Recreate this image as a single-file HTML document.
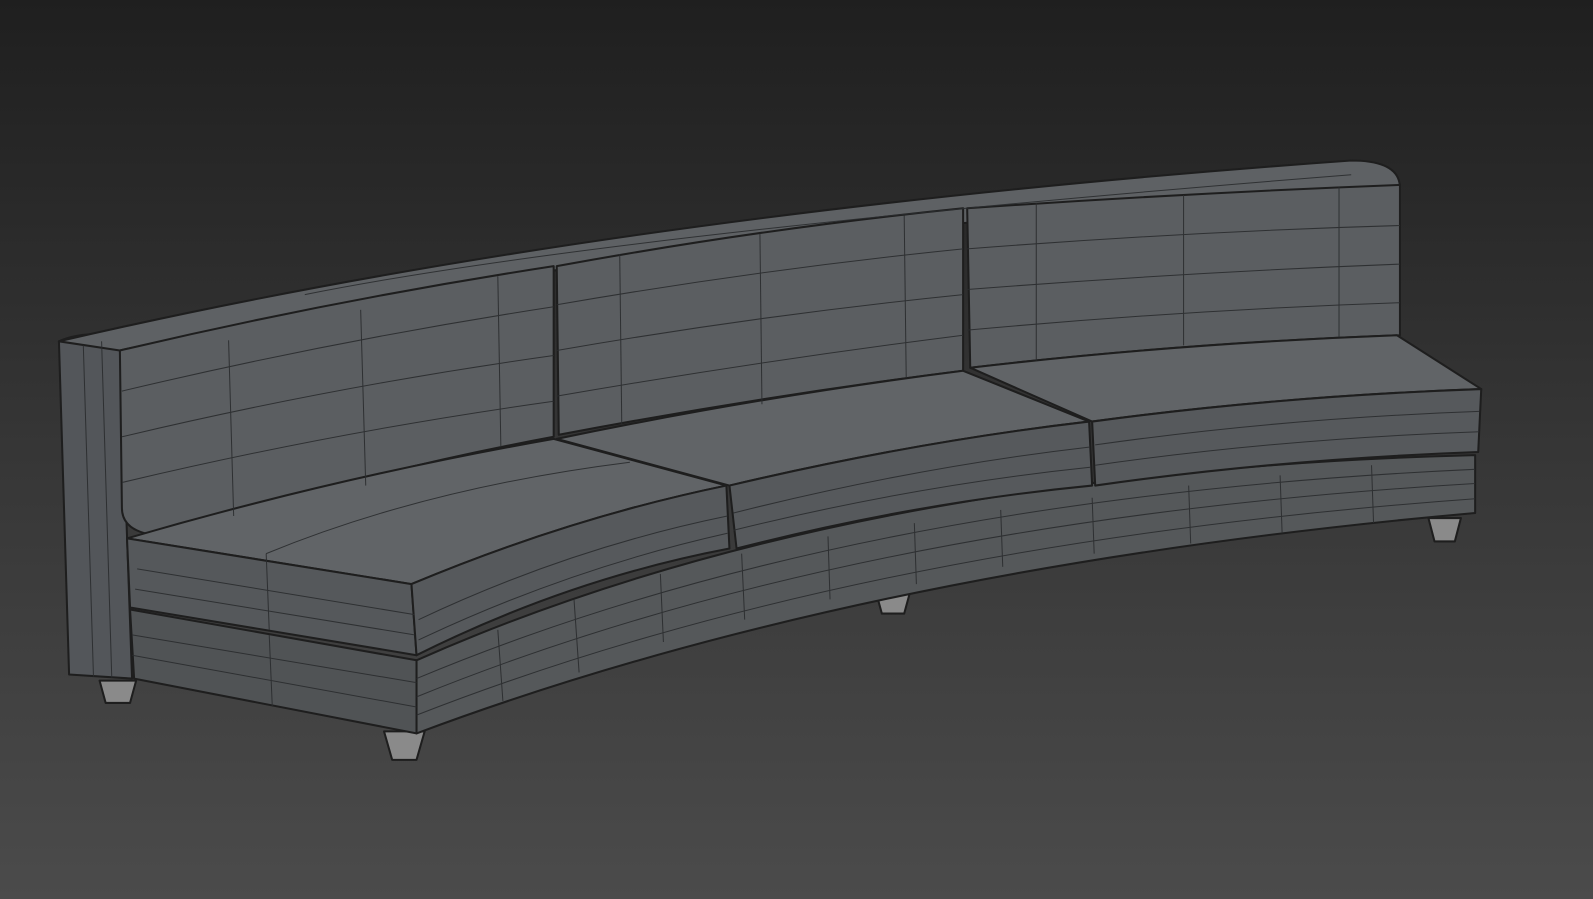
<!DOCTYPE html>
<html><head><meta charset="utf-8"><style>
html,body{margin:0;padding:0;width:1593px;height:899px;overflow:hidden;background:#333;}
svg{display:block}
</style></head><body>
<svg width="1593" height="899" viewBox="0 0 1568 885" preserveAspectRatio="none" xmlns="http://www.w3.org/2000/svg">
<defs>
<linearGradient id="bg" x1="0" y1="0" x2="0" y2="1">
<stop offset="0" stop-color="#1f1f1f"/><stop offset="0.5" stop-color="#363636"/><stop offset="1" stop-color="#4b4b4b"/>
</linearGradient>
</defs>
<rect width="1568" height="885" fill="url(#bg)"/>
<g stroke="#1e1e1e" stroke-width="2" stroke-linejoin="round">
<!-- legs -->
<polygon points="98,670 134,670 128,692 104,692" fill="#8a8a8a"/>
<polygon points="378,720 418,720 410,748 386,748" fill="#8a8a8a"/>
<polygon points="862,582 896,582 890,604 868,604" fill="#8a8a8a"/>
<polygon points="1406,510 1438,510 1432,533 1412,533" fill="#8a8a8a"/>
<!-- base -->
<path d="M128,600 L410,650 L410,722 L132,668 Z" fill="#505355"/>
<path d="M410,650 Q829,464 1452,448 L1452,505 Q845,559 410,722 Z" fill="#55585a"/>
<!-- left arm -->
<path d="M58,336 Q80,326 118,330 L130,668 L68,664 Z" fill="#53565a"/>
<!-- back cap -->
<path d="M58,336 Q600,210 1330,158 Q1378,158 1378,185 L1378,195 Q700,215 118,345 Z" fill="#5e6164"/>
<!-- back cushions -->
<path d="M118,345 Q330,295 545,262 L545,430 Q330,470 178,528 Q120,530 120,500 Z" fill="#5b5e61"/>
<path d="M548,262 Q750,225 948,205 L948,365 Q750,390 550,428 Z" fill="#5b5e61"/>
<path d="M952,205 Q1170,190 1378,182 L1378,330 Q1160,338 955,362 Z" fill="#5b5e61"/>
<!-- seat 1 -->
<path d="M125,530 Q330,470 545,432 L715,478 Q560,510 405,575 Z" fill="#616467"/>
<path d="M125,530 L405,575 L410,645 L128,598 Z" fill="#55585b"/>
<path d="M405,575 Q560,510 715,478 L718,540 Q560,570 410,645 Z" fill="#56595c"/>
<!-- seat 2 -->
<path d="M548,432 Q750,390 948,365 L1072,415 Q900,435 718,478 Z" fill="#616467"/>
<path d="M718,478 Q900,435 1072,415 L1075,478 Q900,495 725,540 Z" fill="#56595c"/>
<!-- seat 3 -->
<path d="M955,362 Q1160,338 1375,330 L1458,383 Q1260,390 1075,415 Z" fill="#616467"/>
<path d="M1075,415 Q1260,390 1458,383 L1455,445 Q1260,452 1078,478 Z" fill="#56595c"/>
</g>
<!-- grid lines -->
<g stroke="#2a2c2e" stroke-width="1" fill="none" opacity="0.9">
<path d="M225,335 L230,508"/><path d="M355,305 L360,478"/><path d="M490,272 L493,440"/>
<path d="M610,250 L612,418"/><path d="M748,230 L750,398"/><path d="M890,212 L892,372"/>
<path d="M1020,200 L1020,355"/><path d="M1165,192 L1165,340"/><path d="M1318,184 L1318,332"/>
<path d="M120,385 Q330,335 545,302"/><path d="M120,430 Q330,380 545,350"/><path d="M120,475 Q330,425 545,395"/>
<path d="M548,300 Q750,265 948,245"/><path d="M548,345 Q750,310 948,290"/><path d="M548,390 Q750,355 948,330"/>
<path d="M952,245 Q1170,228 1378,222"/><path d="M952,285 Q1170,268 1378,260"/><path d="M952,325 Q1170,305 1378,298"/>
<path d="M135,560 L408,605"/><path d="M133,580 L408,625"/><path d="M262,545 L265,620"/><path d="M262,545 Q420,480 620,455"/>
<path d="M412,610 Q560,540 716,508"/><path d="M412,630 Q560,560 716,525"/>
<path d="M722,505 Q900,460 1073,440"/><path d="M722,522 Q900,478 1073,460"/>
<path d="M1078,438 Q1260,412 1456,405"/><path d="M1078,458 Q1260,432 1456,425"/>
<path d="M410,668 Q835,490 1452,462"/><path d="M410,686 Q838,512 1452,476"/><path d="M410,704 Q842,535 1452,491"/>
<path d="M130,625 L410,672"/><path d="M130,645 L410,696"/><path d="M265,625 L268,695"/>
<path d="M490,620 L495,690"/><path d="M565,590 L570,662"/><path d="M650,565 L653,632"/><path d="M730,545 L733,610"/><path d="M815,528 L817,590"/><path d="M900,515 L902,575"/><path d="M985,502 L987,558"/><path d="M1075,490 L1077,545"/><path d="M1170,478 L1172,535"/><path d="M1260,468 L1262,525"/><path d="M1350,458 L1352,515"/>
<path d="M82,340 L92,666"/><path d="M100,336 L110,667"/>
<path d="M300,290 Q600,230 1330,172"/>
</g>
</svg>
</body></html>
